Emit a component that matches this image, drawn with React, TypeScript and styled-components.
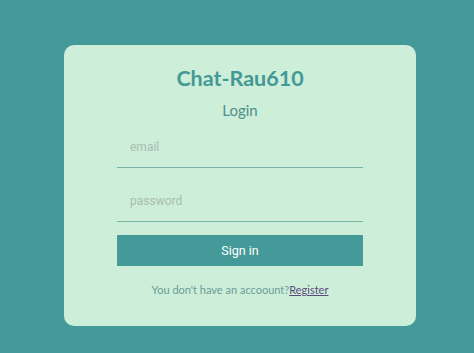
import React from 'react';
import styled, { createGlobalStyle } from 'styled-components';

const GlobalStyle = createGlobalStyle`
  html, body {
    margin: 0;
    padding: 0;
    background: #449a98;
  }
  body {
    font-family: Lato, 'Noto Sans', sans-serif;
  }
`;

const Page = styled.div`
  width: 474px;
  height: 353px;
  box-sizing: border-box;
  padding-top: 45px;
  display: flex;
  justify-content: center;
`;

const Card = styled.div`
  width: 352px;
  height: 281px;
  margin-left: 6px;
  box-sizing: border-box;
  background: #cdeed8;
  border-radius: 10px;
  display: flex;
  flex-direction: column;
  align-items: center;
  padding-top: 18px;
`;

const Title = styled.h1`
  margin: 0;
  font-size: 21.5px;
  font-weight: 700;
  color: #439996;
  line-height: 30px;
`;

const Subtitle = styled.h2`
  margin: 7px 0 0;
  font-size: 15px;
  font-weight: 400;
  color: #4f8f8d;
  line-height: 20px;
`;

const Form = styled.form`
  width: 246px;
  display: flex;
  flex-direction: column;
  margin-top: 6px;
`;

const Input = styled.input`
  height: 41px;
  margin: 0 0 12px;
  border: none;
  border-bottom: 1px solid #79b4ab;
  background: transparent;
  padding: 0 13px;
  font-family: Roboto, 'Liberation Sans', Arial, sans-serif;
  font-size: 12px;
  color: #333;
  outline: none;

  &::placeholder {
    color: #a8bdb2;
  }
`;

const Button = styled.button`
  height: 31px;
  margin-top: 1px;
  border: none;
  background: #449a98;
  color: #ffffff;
  font-family: Roboto, 'Liberation Sans', Arial, sans-serif;
  font-size: 12.5px;
`;

const Footer = styled.p`
  margin: 17px 0 0;
  font-size: 11px;
  color: #6a9c99;
`;

const Link = styled.a`
  color: #5c4a7c;
  text-decoration: underline;
`;

export default function App() {
  return (
    <>
      <GlobalStyle />
      <Page>
        <Card>
          <Title>Chat-Rau610</Title>
          <Subtitle>Login</Subtitle>
          <Form onSubmit={(e) => e.preventDefault()}>
            <Input type="email" placeholder="email" />
            <Input type="password" placeholder="password" />
            <Button type="submit">Sign in</Button>
          </Form>
          <Footer>
            You don't have an accoount?<Link href="#">Register</Link>
          </Footer>
        </Card>
      </Page>
    </>
  );
}
